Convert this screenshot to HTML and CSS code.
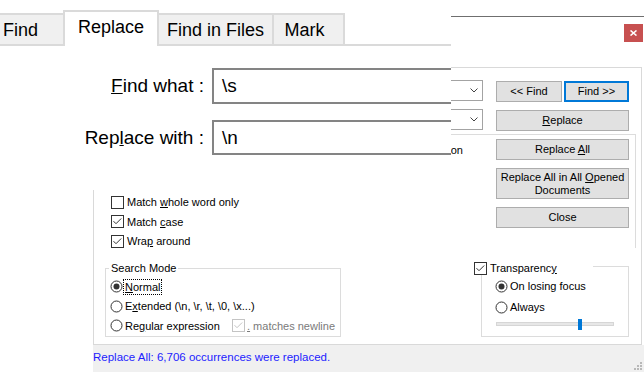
FILE: index.html
```html
<!DOCTYPE html>
<html>
<head>
<meta charset="utf-8">
<link rel="stylesheet" href="styles.css">
</head>
<body>
<div class="dlg">
  <div class="titlebar">
    <div class="close"><svg width="7" height="6" viewBox="0 0 7 6"><path d="M0.5 0.5 L6.5 5.5 M6.5 0.5 L0.5 5.5" stroke="#fff" stroke-width="1.6"/></svg></div>
  </div>
  <div class="panel">
    <div class="row">
      <div class="combo"><svg class="chev" width="8" height="5" viewBox="0 0 8 5"><polyline points="0.5,0.5 4,4 7.5,0.5" fill="none" stroke="#444" stroke-width="1"/></svg></div>
      <div class="btn b-prev">&lt;&lt; Find</div>
      <div class="btn b-next">Find &gt;&gt;</div>
    </div>
    <div class="row row2">
      <div class="combo"><svg class="chev" width="8" height="5" viewBox="0 0 8 5"><polyline points="0.5,0.5 4,4 7.5,0.5" fill="none" stroke="#444" stroke-width="1"/></svg></div>
      <div class="btn b-wide b-rep"><span><u>R</u>eplace</span></div>
    </div>
    <div class="mid">
      <div class="opts">
        <div class="chk"><svg viewBox="0 0 13 13"><rect x="0.5" y="0.5" width="12" height="12" fill="#fff" stroke="#333"/></svg><span>Backward direction</span></div>
        <div class="chk"><svg viewBox="0 0 13 13"><rect x="0.5" y="0.5" width="12" height="12" fill="#fff" stroke="#333"/></svg><span>Match <u>w</u>hole word only</span></div>
        <div class="chk"><svg viewBox="0 0 13 13"><rect x="0.5" y="0.5" width="12" height="12" fill="#fff" stroke="#333"/><polyline points="2.5,6.2 5,8.7 10.2,3.5" fill="none" stroke="#333" stroke-width="1"/></svg><span>Match <u>c</u>ase</span></div>
        <div class="chk"><svg viewBox="0 0 13 13"><rect x="0.5" y="0.5" width="12" height="12" fill="#fff" stroke="#333"/><polyline points="2.5,6.2 5,8.7 10.2,3.5" fill="none" stroke="#333" stroke-width="1"/></svg><span>Wra<u>p</u> around</span></div>
      </div>
      <div class="selgroup">
        <div class="insel"><div class="chk"><svg viewBox="0 0 13 13"><rect x="0.5" y="0.5" width="12" height="12" fill="#fff" stroke="#333"/></svg><span>In selection</span></div></div>
        <div class="selbtns">
          <div class="btn b-wide"><span>Replace <u>A</u>ll</span></div>
          <div class="btn b-wide b-tall"><span>Replace All in All <u>O</u>pened<br>Documents</span></div>
          <div class="btn b-wide">Close</div>
        </div>
      </div>
    </div>
    <div class="bottom">
      <fieldset class="mode">
        <legend>Search Mode</legend>
        <div class="rows">
          <div class="radio"><svg viewBox="0 0 13 13"><circle cx="6.5" cy="6.5" r="5.5" fill="#fff" stroke="#333"/><circle cx="6.5" cy="6.5" r="3" fill="#333"/></svg><span class="focus"><u>N</u>ormal</span></div>
          <div class="radio"><svg viewBox="0 0 13 13"><circle cx="6.5" cy="6.5" r="5.5" fill="#fff" stroke="#333"/></svg><span>E<u>x</u>tended (\n, \r, \t, \0, \x...)</span></div>
          <div class="radio"><div class="rx"><svg viewBox="0 0 13 13"><circle cx="6.5" cy="6.5" r="5.5" fill="#fff" stroke="#333"/></svg><span>Re<u>g</u>ular expression</span></div><div class="chk dis"><svg viewBox="0 0 13 13"><rect x="0.5" y="0.5" width="12" height="12" fill="#fff" stroke="#c4c4c4"/><polyline points="2.5,6.2 5,8.7 10.2,3.5" fill="none" stroke="#c4c4c4" stroke-width="1"/></svg><span><u>.</u> matches newline</span></div></div>
        </div>
      </fieldset>
      <div class="trans">
        <div class="tlabel chk"><svg viewBox="0 0 13 13"><rect x="0.5" y="0.5" width="12" height="12" fill="#fff" stroke="#333"/><polyline points="2.5,6.2 5,8.7 10.2,3.5" fill="none" stroke="#333" stroke-width="1"/></svg><span>Transparenc<u>y</u></span></div>
        <div class="radio tr1"><svg viewBox="0 0 13 13"><circle cx="6.5" cy="6.5" r="5.5" fill="#fff" stroke="#333"/><circle cx="6.5" cy="6.5" r="3" fill="#333"/></svg><span>On losing focus</span></div>
        <div class="radio tr2"><svg viewBox="0 0 13 13"><circle cx="6.5" cy="6.5" r="5.5" fill="#fff" stroke="#333"/></svg><span>Always</span></div>
        <div class="slider"><div class="thumb"></div></div>
      </div>
    </div>
  </div>
  <div class="status">Replace All: 6,706 occurrences were replaced.<svg class="grip" width="8" height="8" viewBox="0 0 8 8"><g fill="#b8b8b8"><rect x="6" y="0" width="2" height="2"/><rect x="3" y="3" width="2" height="2"/><rect x="6" y="3" width="2" height="2"/><rect x="0" y="6" width="2" height="2"/><rect x="3" y="6" width="2" height="2"/><rect x="6" y="6" width="2" height="2"/></g></svg></div>
</div>

<div class="overlay">
  <div class="tabs">
    <div class="tab t1">Find</div>
    <div class="tab t2 sel">Replace</div>
    <div class="tab t3">Find in Files</div>
    <div class="tab t4">Mark</div>
  </div>
  <div class="frow frow1">
    <div class="flabel"><u>F</u>ind what :</div>
    <div class="fbox">\s</div>
  </div>
  <div class="frow frow2">
    <div class="flabel">Rep<u>l</u>ace with :</div>
    <div class="fbox">\n</div>
  </div>
</div>
</body>
</html>
```

FILE: styles.css
```css
* { box-sizing: border-box; margin: 0; padding: 0; }
html, body { width: 644px; height: 372px; overflow: hidden; background: #fff; }
body { position: relative; font-family: "Liberation Sans", Arial, sans-serif; font-size: 11px; color: #000; }
u { text-decoration: underline; text-underline-offset: 1px; }

/* dialog window */
.dlg { position: absolute; left: 93px; top: 16px; width: 551px; height: 356px; display: flex; flex-direction: column; }
.titlebar { height: 51px; flex: none; border-top: 1px solid #6f6f6f; display: flex; justify-content: flex-end; align-items: flex-start; padding: 7px 1px 0 0; }
.close { width: 19px; height: 18px; background: #c75050; display: flex; align-items: center; justify-content: center; }
.panel { height: 278px; width: 549px; flex: none; border: 1px solid #d9d9d9; padding-top: 12px; }

.row { display: flex; height: 22px; align-items: flex-start; }
.row2 { margin-top: 7px; }
.combo { margin-left: 118px; width: 271px; height: 21px; border: 1px solid #a3a3a3; display: flex; justify-content: flex-end; align-items: center; padding-right: 4px; background: #fff; }
.btn { height: 21px; margin-top: 1px; background: #e1e1e1; border: 1px solid #adadad; display: flex; align-items: center; justify-content: center; text-align: center; line-height: 13px; white-space: nowrap; }
.b-prev { width: 66px; margin-left: 13px; }
.b-next { width: 65px; margin-left: 2px; border: 2px solid #0078d7; }
.b-wide { width: 133px; }
.b-rep { margin-left: 13px; }
.b-tall { height: 31px; }

.mid { display: flex; height: 114px; margin-top: 3px; }
.opts { width: 291px; padding: 38.75px 0 0 17px; }
.chk { display: flex; align-items: center; height: 19.5px; white-space: nowrap; }
.chk svg { width: 13px; height: 13px; margin-right: 3px; flex: none; }
.selgroup { width: 251px; border-top: 1px solid #dcdcdc; border-right: 1px solid #dcdcdc; display: flex; }
.insel { width: 111px; height: 21px; margin-top: 4px; display: flex; justify-content: flex-end; align-items: center; padding-right: 33px; }
.selbtns { display: flex; flex-direction: column; padding-top: 4px; }
.selbtns .btn { margin-top: 0; }
.selbtns .btn + .btn { margin-top: 8px; }

.bottom { display: flex; align-items: flex-start; }
fieldset.mode { margin: 13px 0 0 11px; width: 236px; height: 76px; border: 1px solid #dcdcdc; padding: 0 0 0 3px; min-width: 0; }
legend { padding: 0 2px; line-height: 14px; }
.mode .rows { margin-top: 2px; }
.radio { display: flex; align-items: center; height: 19.5px; margin-left: 1px; white-space: nowrap; }
.radio svg { width: 13px; height: 13px; margin-right: 2px; flex: none; }
.rx { display: flex; align-items: center; width: 122px; }
.dis { color: #7a7a7a; }
.focus { outline: 1px dotted #000; outline-offset: 0; padding: 0 1px; margin-left: -1px; line-height: 14px; }

.trans { position: relative; margin: 18px 0 0 140px; width: 148px; height: 71px; border: 1px solid #dcdcdc; padding: 9px 0 0 13px; }
.tlabel { position: absolute; left: -10px; top: -6px; width: 121px; height: 14px; background: #fff; padding: 0 2px; }
.trans .radio { margin-left: 0; height: 20px; }
.trans .tr2 { margin-top: 1px; }
.slider { position: relative; margin: 5px 0 0 1px; width: 118px; height: 4px; background: #e7e7e7; border: 1px solid #d6d6d6; }
.thumb { position: absolute; left: 81px; top: -4px; width: 4px; height: 11px; background: #0078d7; }

.status { position: relative; height: 27px; flex: none; background: #f0f0f0; color: #1c1cff; font-size: 11.5px; line-height: 24px; white-space: nowrap; }
.grip { position: absolute; right: 2px; bottom: 2px; }

/* magnified overlay */
.overlay { position: absolute; left: 0; top: 0; width: 451px; height: 190px; background: #fff; overflow: hidden; font-size: 19px; color: #000; }
.tabs { display: flex; align-items: flex-end; margin-top: 10px; height: 36px; border-bottom: 2px solid #dadada; font-size: 18px; }
.tab { height: 31px; flex: none; background: #f0f0f0; border: 2px solid #dadada; border-bottom: 0; margin-left: -2px; display: flex; align-items: center; justify-content: center; line-height: 1; white-space: nowrap; }
.tab.sel { height: 36px; margin-bottom: -2px; background: #fff; position: relative; z-index: 1; padding-bottom: 4px; }
.t1 { margin-left: -30px; width: 95px; padding-left: 6px; }
.t2 { width: 96px; }
.t3 { width: 117px; }
.t4 { width: 73px; padding-right: 8px; }

.frow { display: flex; align-items: center; }
.frow1 { margin-top: 22px; height: 36px; }
.frow2 { margin-top: 16px; height: 35px; }
.flabel { width: 204px; flex: none; text-align: right; margin-right: 8px; white-space: nowrap; }
.fbox { width: 260px; flex: none; height: 100%; border: 2px solid #848484; border-right: none; padding-left: 8px; display: flex; align-items: center; background: #fff; }
```
